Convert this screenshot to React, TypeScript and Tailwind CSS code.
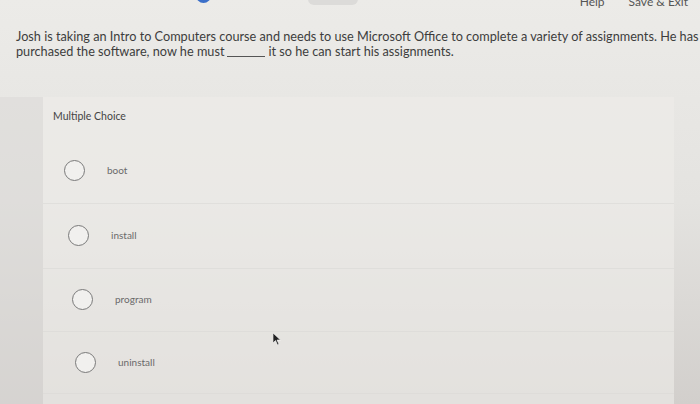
export default function App() {
  const options = [
    { label: "boot", ml: "ml-[21px]", h: "h-[65px]" },
    { label: "install", ml: "ml-[25px]", h: "h-[65px]" },
    { label: "program", ml: "ml-[29px]", h: "h-[63px]" },
    { label: "uninstall", ml: "ml-[32px]", h: "h-[62px]" },
  ];

  return (
    <div className="relative w-[700px] h-[404px] overflow-hidden bg-gradient-to-b from-[#ecebe8] via-[#e4e3e0] to-[#d2cfcc] font-['Lato',sans-serif]">
      {/* top bar, cut off by the photo */}
      <div className="relative h-[22px]">
        <div className="absolute left-[196px] -top-[12px] w-[15px] h-[15px] rounded-full border-[3px] border-[#3b6fc9]" />
        <div className="absolute left-[308px] -top-[12px] w-[50px] h-[17px] rounded-md bg-[#dcdbd9]" />
        <div className="absolute right-[12px] -top-[7px] flex gap-[24px] text-[12px] text-[#555]">
          <span>Help</span>
          <span>Save &amp; Exit</span>
        </div>
      </div>

      {/* question */}
      <div className="px-[16px] pt-[7px] text-[12.7px] leading-[15px] text-[#3d3d3d] whitespace-nowrap">
        <p>
          Josh is taking an Intro to Computers course and needs to use Microsoft Office to complete a variety of assignments. He has
        </p>
        <p>
          purchased the software, now he must
          <span className="inline-block w-[38px] border-b border-[#555] mx-[3px] translate-y-[1px]" />
          it so he can start his assignments.
        </p>
      </div>

      {/* answer panel */}
      <div className="flex mt-[38px]">
        <div className="w-[43px] h-[320px] bg-[#d9d8d5]/50" />
        <div className="flex-1 mr-[26px] bg-[#eeece9]/60">
          <p className="pl-[10px] pt-[12px] text-[10.5px] text-[#444]">Multiple Choice</p>
          <div className="mt-[14px] flex flex-col">
            {options.map((o) => (
              <div key={o.label} className={`${o.h} flex items-center border-b border-[#dcdad7]/70`}>
                <div className={`${o.ml} w-[21px] h-[21px] rounded-full border border-[#7a7a7a] bg-[#f1f0ee]`} />
                <span className="ml-[22px] text-[10px] text-[#6a6a6a]">{o.label}</span>
              </div>
            ))}
          </div>
        </div>
      </div>

      {/* cursor */}
      <svg className="absolute left-[273px] top-[333px]" width="8" height="12" viewBox="0 0 8 12">
        <path d="M0 0 L0 10 L2.5 7.5 L4.5 12 L6 11.3 L4 7 L7.5 7 Z" fill="#222" stroke="#fff" strokeWidth="0.6" />
      </svg>
    </div>
  );
}
